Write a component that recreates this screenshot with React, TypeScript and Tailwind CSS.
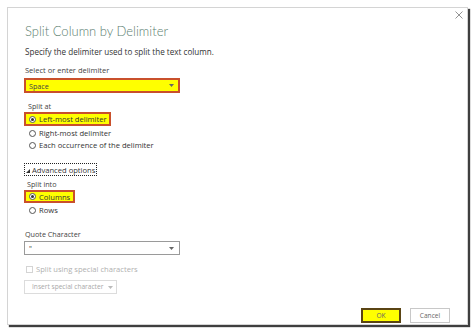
import React from 'react';

const Caret = ({ className = '' }: { className?: string }) => (
  <svg width="5" height="3" viewBox="0 0 5 3" className={className}>
    <path d="M0 0h5L2.5 3z" fill="currentColor" />
  </svg>
);

const Radio = ({ checked }: { checked?: boolean }) => (
  <span className="w-[7px] h-[7px] rounded-full border border-[#555] flex items-center justify-center shrink-0 bg-white">
    {checked && <span className="w-[3px] h-[3px] rounded-full bg-[#333]" />}
  </span>
);

const RadioRow = ({ label, checked, highlight }: { label: string; checked?: boolean; highlight?: boolean }) => (
  <div
    className={
      highlight
        ? 'self-start flex items-center gap-[3px] pl-[3px] pr-[2px] h-[14px] bg-[#ffff00] border-2 border-[#c9502c]'
        : 'self-start flex items-center gap-[3px] pl-[5px] h-[10px]'
    }
  >
    <Radio checked={checked} />
    <span className="text-[7.6px] leading-[10px] text-[#333]">{label}</span>
  </div>
);

const App = () => {
  return (
    <div className="w-[474px] h-[334px] bg-white pt-[7px] pl-[7px]" style={{ fontFamily: '"Open Sans", "Noto Sans", sans-serif' }}>
      <div className="relative w-[461px] h-[318px] border border-[#d4d4d4] bg-white shadow-[2px_2px_1px_#3f3f3f] flex flex-col pl-[16px] pr-[17px]">
        <svg className="absolute top-[3px] right-[4px]" width="8" height="8" viewBox="0 0 8 8">
          <path d="M0.5 0.5l7 7M7.5 0.5l-7 7" stroke="#888" strokeWidth="0.9" />
        </svg>

        <h1 className="mt-[15px] ml-[1px] text-[13px] leading-[16px] font-light text-[#5d8070]" style={{ fontFamily: 'Lato, "Open Sans", sans-serif' }}>
          Split Column by Delimiter
        </h1>
        <p className="mt-[8px] ml-[1px] text-[8.1px] leading-[10px] text-[#333]">
          Specify the delimiter used to split the text column.
        </p>

        <div className="mt-[8px] ml-[1px] text-[7.5px] leading-[10px] text-[#444]">Select or enter delimiter</div>
        <div className="mt-[3px] w-[156px] h-[15px] bg-[#ffff00] border-2 border-[#c9502c] flex items-center justify-between pl-[3px] pr-[4px]">
          <span className="text-[7.2px] leading-[10px] text-[#444]">Space</span>
          <Caret className="text-[#666]" />
        </div>

        <div className="mt-[8px] ml-[4px] text-[7.2px] leading-[10px] text-[#444]">Split at</div>
        <div className="mt-[1px] flex flex-col">
          <RadioRow label="Left-most delimiter" checked highlight />
          <div className="mt-[2px]"><RadioRow label="Right-most delimiter" /></div>
          <div className="mt-[2px]"><RadioRow label="Each occurrence of the delimiter" /></div>
        </div>

        <div className="mt-[13px] self-start h-[13px] border border-dotted border-[#222] flex items-center gap-[2px] pl-[1px] pr-[1px]">
          <svg width="4" height="4" viewBox="0 0 4 4" className="mt-[3px]">
            <path d="M4 0v4H0z" fill="#333" />
          </svg>
          <span className="text-[7.6px] leading-[10px] text-[#333]">Advanced options</span>
        </div>

        <div className="mt-[3px] ml-[3px] text-[7.2px] leading-[10px] text-[#444]">Split into</div>
        <div className="mt-[1px] flex flex-col">
          <div className="self-start flex items-center gap-[3px] pl-[3px] pr-[3px] h-[13px] bg-[#ffff00] border-2 border-[#c9502c]">
            <Radio checked />
            <span className="text-[7.6px] leading-[10px] text-[#333]">Columns</span>
          </div>
          <div className="mt-[2px]"><RadioRow label="Rows" /></div>
        </div>

        <div className="mt-[14px] ml-[1px] text-[7.2px] leading-[10px] text-[#444]">Quote Character</div>
        <div className="mt-[2px] w-[156px] h-[14px] border border-[#9a9a9a] flex items-center justify-between pl-[4px] pr-[5px]">
          <span className="text-[7.2px] leading-[10px] text-[#444]">"</span>
          <Caret className="text-[#666]" />
        </div>

        <div className="mt-[9px] ml-[2px] flex items-center gap-[3px] h-[10px]">
          <span className="w-[7px] h-[7px] border border-[#d4d4d4] bg-white" />
          <span className="text-[7.6px] leading-[10px] text-[#b0b0b0]">Split using special characters</span>
        </div>
        <div className="mt-[6px] self-start w-[93px] h-[14px] border border-[#dcdcdc] flex items-center gap-[5px] pl-[7px]">
          <span className="text-[6.6px] leading-[10px] text-[#a8a8a8]">Insert special character</span>
          <Caret className="text-[#bbb]" />
        </div>

        <div className="mt-auto mb-[1px] flex justify-end gap-[9px]">
          <button className="w-[40px] h-[15px] bg-[#ffff00] border-2 border-[#5a4414] text-[6.6px] leading-[10px] text-[#666]">OK</button>
          <button className="w-[40px] h-[15px] bg-white border border-[#c8c8c8] text-[6.6px] leading-[10px] text-[#666]">Cancel</button>
        </div>
      </div>
    </div>
  );
};

export default App;
